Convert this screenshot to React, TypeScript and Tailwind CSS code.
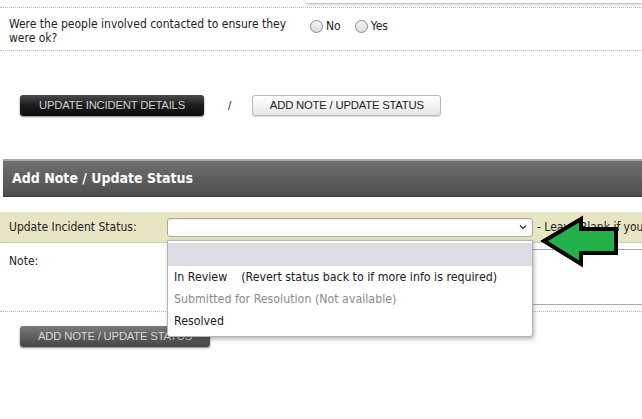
export default function App() {
  return (
    <div className="relative h-[419px] w-[642px] overflow-hidden bg-white font-['DejaVu_Sans_Condensed','DejaVu_Sans',sans-serif] text-[12px] text-[#222]">
      {/* edge of the panel above */}
      <div className="ml-[305px] h-[3px] rounded-bl-[4px] bg-white shadow-[0_1px_3px_rgba(0,0,0,0.35)]" />
      <div className="mt-[4px] border-t border-dotted border-[#b5b5b5]" />

      {/* question row */}
      <div className="flex h-[42px] items-start pl-[9px] pt-[9px]">
        <div className="w-[296px] shrink-0 leading-[14px]">Were the people involved contacted to ensure they were ok?</div>
        <label className="ml-[5px] flex items-center gap-[3px]">
          <span className="h-[13px] w-[13px] rounded-full border border-[#8a8a8a] bg-gradient-to-b from-[#f4f4f4] to-[#dcdcdc]" />
          No
        </label>
        <label className="ml-[14px] flex items-center gap-[3px]">
          <span className="h-[13px] w-[13px] rounded-full border border-[#8a8a8a] bg-gradient-to-b from-[#f4f4f4] to-[#dcdcdc]" />
          Yes
        </label>
      </div>
      <div className="border-t border-dotted border-[#b5b5b5]" />

      {/* tab buttons */}
      <div className="mt-[44px] flex items-center pl-[20px] font-['Liberation_Sans',Arial,sans-serif]">
        <button className="h-[21px] w-[184px] rounded-[3px] bg-gradient-to-b from-[#4a4a4a] via-[#1c1c1c] to-[#0a0a0a] text-[11.3px] tracking-[-0.2px] text-[#cfcfcf] shadow-[0_1px_2px_rgba(0,0,0,0.5)]">
          UPDATE INCIDENT DETAILS
        </button>
        <span className="ml-[24px] text-[12px] text-[#333]">/</span>
        <button className="ml-[21px] h-[21px] w-[189px] rounded-[3px] border border-[#b8b8b8] bg-gradient-to-b from-white to-[#e6e6e6] text-[11.3px] tracking-[-0.2px] text-[#222] shadow-[0_1px_1px_rgba(0,0,0,0.15)]">
          ADD NOTE / UPDATE STATUS
        </button>
      </div>

      {/* section header */}
      <div className="ml-[3px] mt-[43px] flex h-[38px] items-center border-t-2 border-b border-t-[#a8a8a8] border-b-[#3c3c3c] bg-gradient-to-b from-[#707070] to-[#4e4e4e] pl-[9px] text-[14px] font-bold text-white">
        Add Note / Update Status
      </div>

      {/* status row */}
      <div className="mt-[15px] flex h-[31px] items-center overflow-hidden border-b border-dotted border-[#b5b5b5] bg-[#e7e5c2] pl-[9px]">
        <div className="w-[158px] shrink-0 whitespace-nowrap text-[#222]">Update Incident Status:</div>
        <div className="flex h-[19px] w-[366px] shrink-0 items-center justify-end rounded-[3px] border border-[#a9a9a9] bg-white pr-[4px] shadow-[inset_0_1px_1px_rgba(0,0,0,0.08)]">
          <svg width="10" height="10" viewBox="0 0 10 10">
            <path d="M2 3.5 L5 6.5 L8 3.5" fill="none" stroke="#333" strokeWidth="1.3" />
          </svg>
        </div>
        <div className="ml-[4px] shrink-0 whitespace-nowrap">- Leave Blank if you do not want to change the status</div>
      </div>

      {/* note row */}
      <div className="flex h-[69px] border-b border-dotted border-[#b5b5b5] pl-[9px] pt-[9px]">
        <div className="w-[158px] shrink-0">Note:</div>
        <div className="-mr-[20px] mt-[-3px] h-[56px] flex-1 border border-[#a9a9a9] bg-white" />
      </div>

      <div className="mt-[14px] pl-[20px] font-['Liberation_Sans',Arial,sans-serif]">
        <button className="h-[21px] w-[190px] rounded-[3px] bg-gradient-to-b from-[#7a7a7a] to-[#454545] text-[11.3px] tracking-[-0.2px] text-[#d6d6d6] shadow-[0_1px_2px_rgba(0,0,0,0.5)]">
          ADD NOTE / UPDATE STATUS
        </button>
      </div>

      {/* open dropdown list */}
      <div className="absolute left-[167px] top-[240px] w-[366px] rounded-b-[3px] border border-[#b4b4b4] bg-white pb-[4px] pt-[2px] text-[12.3px] shadow-[1px_2px_4px_rgba(0,0,0,0.3)]">
        <div className="h-[23px] bg-[#dcdce4]" />
        <div className="flex h-[22px] items-center whitespace-pre pl-[6px] text-[#1a1a1a]">In Review    (Revert status back to if more info is required)</div>
        <div className="flex h-[22px] items-center pl-[6px] text-[#8a8a8a]">Submitted for Resolution (Not available)</div>
        <div className="flex h-[22px] items-center pl-[6px] text-[#1a1a1a]">Resolved</div>
      </div>

      {/* annotation arrow */}
      <svg className="absolute left-0 top-0" width="642" height="419" viewBox="0 0 642 419">
        <path
          d="M544 241 L581 219 L581 229 L616 229 L616 253 L581 253 L581 264 Z"
          fill="#22b04b"
          stroke="#000"
          strokeWidth="4"
          strokeLinejoin="miter"
        />
      </svg>
    </div>
  );
}
